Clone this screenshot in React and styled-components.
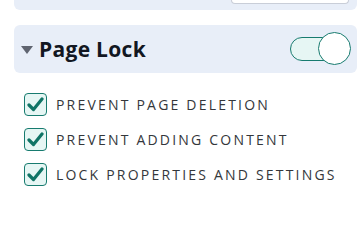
import React from "react";
import styled, { createGlobalStyle } from "styled-components";

const GlobalStyle = createGlobalStyle`
  html, body {
    margin: 0;
    padding: 0;
    background: #ffffff;
    font-family: "Open Sans", "Noto Sans", sans-serif;
  }
`;

const Page = styled.div`
  width: 343px;
  padding-left: 14px;
  display: flex;
  flex-direction: column;
`;

const TopPanel = styled.div`
  height: 10px;
  background: #e8eef8;
  border-radius: 0 0 6px 6px;
  display: flex;
  justify-content: flex-end;
  padding-right: 8px;
`;

const CutInput = styled.div`
  width: 116px;
  height: 3px;
  background: #ffffff;
  border: 1px solid #c9ced8;
  border-top: none;
  border-radius: 0 0 5px 5px;
`;

const Header = styled.div`
  margin-top: 15px;
  height: 48px;
  background: #e8eef8;
  border-radius: 6px;
  display: flex;
  align-items: center;
  padding: 0 7px;
`;

const Caret = styled.span`
  width: 0;
  height: 0;
  border-left: 6px solid transparent;
  border-right: 6px solid transparent;
  border-top: 8px solid #5f6470;
  margin-right: 6px;
  margin-top: 2px;
`;

const Title = styled.h2`
  margin: 0;
  flex: 1;
  font-size: 21px;
  font-weight: 700;
  color: #121722;
  letter-spacing: 0.3px;
`;

const Toggle = styled.div`
  position: relative;
  width: 55px;
  height: 24px;
  margin-right: 5px;
  box-sizing: border-box;
  border: 1.5px solid #177b6f;
  border-radius: 12px;
  background: ${(p) => (p.$on ? "#e6f6f4" : "#f2f2f2")};
`;

const Knob = styled.span`
  position: absolute;
  top: -6px;
  right: -7px;
  width: 33px;
  height: 33px;
  box-sizing: border-box;
  border-radius: 50%;
  border: 1.5px solid #177b6f;
  background: #ffffff;
`;

const List = styled.div`
  margin-top: 20px;
  padding-left: 10px;
  display: flex;
  flex-direction: column;
  gap: 12px;
`;

const Row = styled.label`
  display: flex;
  align-items: center;
  gap: 9px;
  height: 23px;
`;

const Box = styled.span`
  width: 23px;
  height: 23px;
  box-sizing: border-box;
  border: 1.5px solid #177b6f;
  border-radius: 4px;
  background: #e6f6f4;
  display: flex;
  align-items: center;
  justify-content: center;
`;

const Label = styled.span`
  font-size: 14px;
  color: #34373b;
  letter-spacing: 2.2px;
  text-transform: uppercase;
  white-space: nowrap;
`;

const Check = () => (
  <svg width="17" height="15" viewBox="0 0 17 15">
    <path
      d="M2 8 L6.5 12.5 L15 2"
      fill="none"
      stroke="#107466"
      strokeWidth="3.2"
      strokeLinecap="round"
      strokeLinejoin="round"
    />
  </svg>
);

const options = [
  "Prevent page deletion",
  "Prevent adding content",
  "Lock properties and settings",
];

export default function App() {
  return (
    <>
      <GlobalStyle />
      <Page>
        <TopPanel>
          <CutInput />
        </TopPanel>
        <Header>
          <Caret />
          <Title>Page Lock</Title>
          <Toggle $on>
            <Knob />
          </Toggle>
        </Header>
        <List>
          {options.map((opt) => (
            <Row key={opt}>
              <Box>
                <Check />
              </Box>
              <Label>{opt}</Label>
            </Row>
          ))}
        </List>
      </Page>
    </>
  );
}
